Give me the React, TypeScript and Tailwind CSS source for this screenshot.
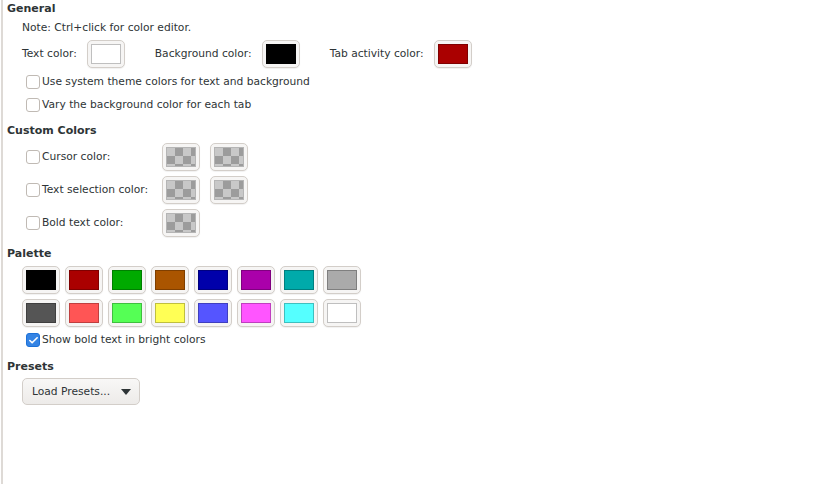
import { Check } from "lucide-react";

const PALETTE = [
  ["#000000", "#aa0000", "#00aa00", "#aa5500", "#0000aa", "#aa00aa", "#00aaaa", "#aaaaaa"],
  ["#555555", "#ff5555", "#55ff55", "#ffff55", "#5555ff", "#ff55ff", "#55ffff", "#ffffff"],
];

function Swatch({ color, empty }: { color?: string; empty?: boolean }) {
  return (
    <button className="w-[38px] h-[28px] shrink-0 rounded-[5px] border border-[#d3cec9] bg-[#f6f5f4] shadow-[0_1px_1px_rgba(0,0,0,0.06)] flex items-center justify-center">
      {empty ? (
        <span className="block w-[30px] h-[20px] border border-[#b5b5b5] bg-[conic-gradient(#9c9c9c_25%,#c8c8c8_0_50%,#9c9c9c_0_75%,#c8c8c8_0)] bg-[length:16px_16px]" />
      ) : (
        <span
          className="block w-[30px] h-[20px] border border-black/25"
          style={{ backgroundColor: color }}
        />
      )}
    </button>
  );
}

function CheckBox({ checked, label }: { checked?: boolean; label: string }) {
  return (
    <label className="flex items-center gap-[2px] h-[14px] whitespace-nowrap">
      <span
        className={
          checked
            ? "w-[14px] h-[14px] shrink-0 rounded-[3px] bg-[#3584e4] border border-[#1c71d8] flex items-center justify-center"
            : "w-[14px] h-[14px] shrink-0 rounded-[3px] bg-white border border-[#c0bab4]"
        }
      >
        {checked && <Check className="w-[11px] h-[11px] text-white" strokeWidth={3.5} />}
      </span>
      <span>{label}</span>
    </label>
  );
}

function Heading({ children }: { children: string }) {
  return <h2 className="font-bold text-[11px] leading-[14px] pl-[4px]">{children}</h2>;
}

export default function App() {
  return (
    <div className="w-[825px] h-[484px] bg-white overflow-hidden">
      <div className="ml-px h-full border-l-2 border-[#dedad6] text-[10.7px] leading-[14px] text-[#2e3436] font-['DejaVu_Sans',sans-serif] pt-[2px]">
        <Heading>General</Heading>
        <p className="pl-[19px] mt-[5px]">Note: Ctrl+click for color editor.</p>

        <div className="flex items-center pl-[19px] mt-[5px]">
          <span>Text color:</span>
          <span className="ml-[10px]"><Swatch color="#ffffff" /></span>
          <span className="ml-[30px]">Background color:</span>
          <span className="ml-[10px]"><Swatch color="#000000" /></span>
          <span className="ml-[30px]">Tab activity color:</span>
          <span className="ml-[10px]"><Swatch color="#aa0000" /></span>
        </div>

        <div className="pl-[23px] mt-[7px] flex flex-col gap-[9px]">
          <CheckBox label="Use system theme colors for text and background" />
          <CheckBox label="Vary the background color for each tab" />
        </div>

        <div className="mt-[12px]">
          <Heading>Custom Colors</Heading>
        </div>
        <div className="pl-[23px] mt-[5px] grid grid-cols-[126px_38px_38px] gap-x-[10px] gap-y-[5px] items-center w-fit">
          <CheckBox label="Cursor color:" />
          <Swatch empty />
          <Swatch empty />
          <CheckBox label="Text selection color:" />
          <Swatch empty />
          <Swatch empty />
          <CheckBox label="Bold text color:" />
          <Swatch empty />
        </div>

        <div className="mt-[10px]">
          <Heading>Palette</Heading>
        </div>
        <div className="pl-[19px] mt-[5px] flex flex-col gap-[5px]">
          {PALETTE.map((row, i) => (
            <div key={i} className="flex gap-[5px]">
              {row.map((c) => (
                <Swatch key={c} color={c} />
              ))}
            </div>
          ))}
        </div>
        <div className="pl-[23px] mt-[6px]">
          <CheckBox checked label="Show bold text in bright colors" />
        </div>

        <div className="mt-[13px]">
          <Heading>Presets</Heading>
        </div>
        <div className="pl-[19px] mt-[4px]">
          <button className="w-[118px] h-[27px] rounded-[5px] border border-[#d3cec9] bg-[linear-gradient(#f8f7f6,#edebe9)] flex items-center justify-between pl-[9px] pr-[8px] whitespace-nowrap">
            <span>Load Presets...</span>
            <svg width="10" height="6" viewBox="0 0 10 6">
              <path d="M0 0 H10 L5 6 Z" fill="#2e3436" />
            </svg>
          </button>
        </div>
      </div>
    </div>
  );
}
